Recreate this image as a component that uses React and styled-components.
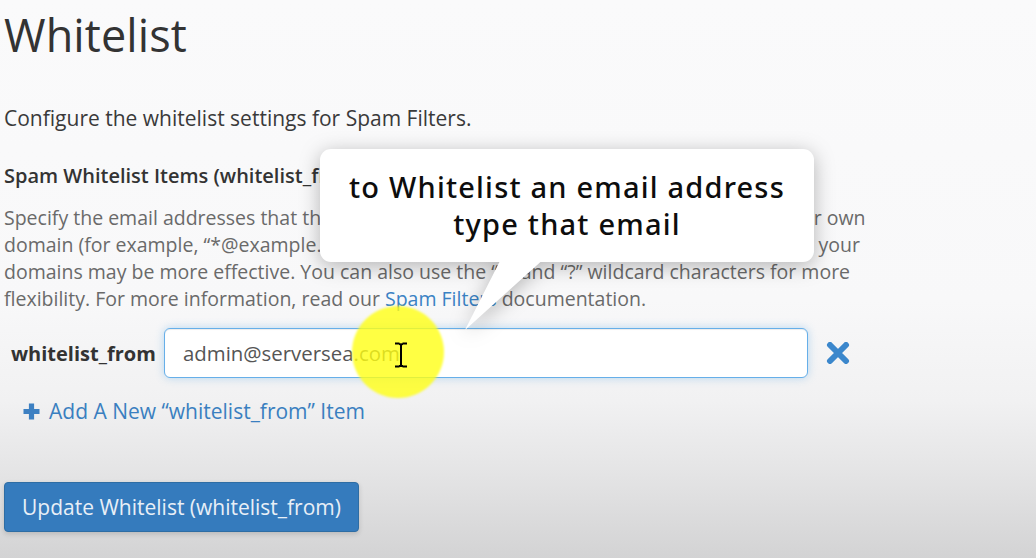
import React from "react";
import styled, { createGlobalStyle } from "styled-components";

const Global = createGlobalStyle`
  html, body { margin: 0; padding: 0; }
  body {
    font-family: "Open Sans", "Liberation Sans", sans-serif;
    background: #f9f9fa;
  }
`;

const Page = styled.div`
  position: relative;
  width: 1036px;
  height: 558px;
  overflow: hidden;
  box-sizing: border-box;
  padding: 10px 0 0 4px;
  background: linear-gradient(
    to bottom,
    #fafafb 0%,
    #f8f8f9 54%,
    #f1f1f2 72%,
    #e4e4e5 85%,
    #d3d3d4 100%
  );
  color: #333;
`;

const Title = styled.h1`
  margin: 0;
  font-size: 45px;
  font-weight: 400;
  line-height: 50px;
  color: #333;
  letter-spacing: 0.1px;
`;

const Lead = styled.p`
  margin: 45px 0 0 0;
  font-size: 21px;
  line-height: 27px;
  color: #3a3a3a;
`;

const SectionTitle = styled.h2`
  margin: 30px 0 0 0;
  font-size: 20px;
  font-weight: 600;
  line-height: 27px;
  color: #333;
`;

const Desc = styled.p`
  margin: 15px 0 0 0;
  font-size: 19.5px;
  line-height: 27px;
  color: #6a6a6a;
`;

const Line = styled.span`
  display: block;
  white-space: nowrap;
`;

const Link = styled.a`
  color: #3a82c4;
  text-decoration: none;
`;

const FieldRow = styled.div`
  margin-top: 16px;
  display: flex;
  align-items: center;
  height: 50px;
`;

const Label = styled.label`
  width: 160px;
  padding-left: 7px;
  box-sizing: border-box;
  font-size: 20px;
  font-weight: 700;
  color: #333;
`;

const Input = styled.div`
  width: 644px;
  height: 50px;
  box-sizing: border-box;
  border: 1px solid #66afe9;
  border-radius: 6px;
  background: #fff;
  box-shadow: inset 0 1px 1px rgba(0, 0, 0, 0.075), 0 0 8px rgba(102, 175, 233, 0.45);
  display: flex;
  align-items: center;
  padding-left: 18px;
  font-size: 20.4px;
  color: #555;
`;

const IconButton = styled.button`
  margin-left: 18px;
  border: 0;
  background: none;
  padding: 0;
  display: flex;
  align-items: center;
`;

const AddLink = styled.a`
  margin: 20px 0 0 18px;
  display: flex;
  align-items: center;
  gap: 8px;
  font-size: 21px;
  line-height: 27px;
  color: #3a7fc0;
  text-decoration: none;
`;

const PrimaryButton = styled.button`
  margin-top: 57px;
  height: 50px;
  width: 355px;
  box-sizing: border-box;
  border: 1px solid #2e6da4;
  border-radius: 4px;
  background: #357bbd;
  color: #e8eff7;
  font-family: "Open Sans", "Liberation Sans", sans-serif;
  font-size: 21px;
  padding: 0;
  box-shadow: 0 2px 5px rgba(0, 0, 0, 0.15);
`;

const Callout = styled.div`
  position: absolute;
  left: 320px;
  top: 149px;
  width: 494px;
  height: 113px;
  filter: drop-shadow(0 4px 10px rgba(0, 0, 0, 0.28));
`;

const CalloutBox = styled.div`
  width: 100%;
  height: 100%;
  background: #fff;
  border-radius: 11px;
  display: flex;
  flex-direction: column;
  align-items: center;
  justify-content: center;
  font-family: "Noto Sans", "Open Sans", sans-serif;
  font-weight: 500;
  font-size: 29px;
  letter-spacing: 1.2px;
  line-height: 37px;
  color: #0d0d0d;
  padding-bottom: 2px;
  box-sizing: border-box;
`;

const Tail = styled.svg`
  position: absolute;
  left: 140px;
  top: 108px;
`;

const Highlight = styled.div`
  position: absolute;
  left: 352px;
  top: 306px;
  width: 92px;
  height: 92px;
  border-radius: 50%;
  background: rgba(255, 255, 20, 0.8);
  filter: blur(1px);
`;

const Cursor = styled.svg`
  position: absolute;
  left: 393px;
  top: 342px;
`;

const XIcon = () => (
  <svg width="24" height="22" viewBox="0 0 24 22">
    <path
      d="M4 3 L20 19 M20 3 L4 19"
      stroke="#3b87cc"
      strokeWidth="6"
      strokeLinecap="round"
      fill="none"
    />
  </svg>
);

const PlusIcon = () => (
  <svg width="19" height="19" viewBox="0 0 19 19">
    <path d="M9.5 1.5 V17.5 M1.5 9.5 H17.5" stroke="#3d80c2" strokeWidth="5.2" strokeLinecap="butt" fill="none" />
  </svg>
);

export default function App() {
  return (
    <>
      <Global />
      <Page>
        <Title>Whitelist</Title>
        <Lead>Configure the whitelist settings for Spam Filters.</Lead>
        <SectionTitle>Spam Whitelist Items (whitelist_from)</SectionTitle>
        <Desc>
          <Line>Specify the email addresses that the system should always accept, so do not whitelist your own</Line>
          <Line>domain (for example, “*@example.com”). Spammers can forge an address, so blacklisting your</Line>
          <Line>domains may be more effective. You can also use the “*” and “?” wildcard characters for more</Line>
          <Line>
            flexibility. For more information, read our <Link href="#">Spam Filters</Link> documentation.
          </Line>
        </Desc>
        <FieldRow>
          <Label>whitelist_from</Label>
          <Input>admin@serversea.com</Input>
          <IconButton aria-label="remove">
            <XIcon />
          </IconButton>
        </FieldRow>
        <AddLink href="#">
          <PlusIcon />
          Add A New “whitelist_from” Item
        </AddLink>
        <PrimaryButton>Update Whitelist (whitelist_from)</PrimaryButton>

        <Highlight />
        <Cursor width="16" height="26" viewBox="0 0 16 26">
          <path d="M2 1.5 H6.5 M9.5 1.5 H14 M8 2.5 V23.5 M2 24.5 H6.5 M9.5 24.5 H14 M6 2 Q8 2 8 3 Q8 2 10 2 M6 24 Q8 24 8 23 Q8 24 10 24" stroke="#000" strokeWidth="2" fill="none" />
        </Cursor>

        <Callout>
          <CalloutBox>
            <span>to Whitelist an email address</span>
            <span>type that email</span>
          </CalloutBox>
          <Tail width="90" height="76" viewBox="0 0 90 76">
            <polygon points="42,0 86,0 5,73" fill="#fff" />
          </Tail>
        </Callout>
      </Page>
    </>
  );
}
